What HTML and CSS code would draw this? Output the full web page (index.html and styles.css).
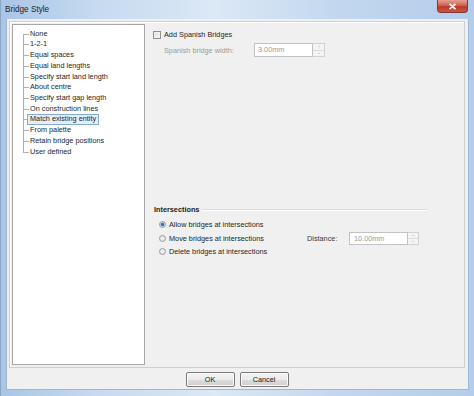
FILE: index.html
```html
<!DOCTYPE html>
<html>
<head>
<meta charset="utf-8">
<link rel="stylesheet" href="styles.css">
</head>
<body>
<div class="window">
  <div class="titlebar">
    <span class="title">Bridge Style</span>
    <div class="close">
      <svg width="9" height="7" viewBox="0 0 9 7"><path d="M1.5 0.8 L7.5 6.2 M7.5 0.8 L1.5 6.2" stroke="#fff" stroke-width="1.8" fill="none"/></svg>
    </div>
  </div>
  <div class="client">
    <div class="panel">
      <div class="tree">
        <ul class="tree-list">
          <li><span>None</span></li>
          <li><span>1-2-1</span></li>
          <li><span>Equal spaces</span></li>
          <li><span>Equal land lengths</span></li>
          <li><span>Specify start land length</span></li>
          <li><span>About centre</span></li>
          <li><span>Specify start gap length</span></li>
          <li><span>On construction lines</span></li>
          <li><span class="selected">Match existing entity</span></li>
          <li><span>From palette</span></li>
          <li><span>Retain bridge positions</span></li>
          <li><span>User defined</span></li>
        </ul>
      </div>
      <div class="options">
        <div class="check-row"><span class="checkbox"></span><span>Add Spanish Bridges</span></div>
        <div class="field-row">
          <span class="field-label disabled">Spanish bridge width:</span>
          <div class="spin">
            <div class="spin-input disabled">3.00mm</div>
            <div class="spin-btns"><span class="spin-up"></span><span class="spin-down"></span></div>
          </div>
        </div>
        <div class="group">
          <div class="group-title"><span class="group-name">Intersections</span><span class="rule"></span></div>
          <div class="radios">
            <div class="radio-row"><span class="radio checked"></span><span class="radio-label">Allow bridges at intersections</span></div>
            <div class="radio-row"><span class="radio"></span><span class="radio-label">Move bridges at intersections</span>
              <span class="dist-label">Distance:</span>
              <div class="spin small">
                <div class="spin-input disabled">10.00mm</div>
                <div class="spin-btns"><span class="spin-up"></span><span class="spin-down"></span></div>
              </div>
            </div>
            <div class="radio-row"><span class="radio"></span><span class="radio-label">Delete bridges at intersections</span></div>
          </div>
        </div>
      </div>
    </div>
    <div class="buttons">
      <button class="btn">OK</button>
      <button class="btn">Cancel</button>
    </div>
  </div>
</div>
</body>
</html>
```

FILE: styles.css
```css
* { box-sizing: border-box; }
html, body { margin: 0; padding: 0; }
body {
  width: 474px;
  height: 396px;
  font-family: "Liberation Sans", Arial, sans-serif;
  font-size: 7.3px;
  color: #262626;
  overflow: hidden;
}
.window {
  width: 474px;
  height: 396px;
  display: flex;
  flex-direction: column;
  background: linear-gradient(to right, #a9c5e6 0%, #c6daf0 20%, #dbe8f6 45%, #c3d8ef 70%, #b4cdea 100%);
  border-left: 1px solid #8aa6c8;
}
.titlebar {
  height: 19px;
  display: flex;
  align-items: flex-start;
  justify-content: space-between;
  flex: none;
}
.title {
  font-size: 8.2px;
  line-height: 20px;
  padding-left: 4px;
  color: #1e1e1e;
}
.close {
  width: 31px;
  height: 13px;
  margin-right: 6px;
  border: 1px solid #7d3a3a;
  border-top: none;
  border-radius: 0 0 4px 4px;
  background: linear-gradient(to bottom, #e6a090 0%, #d2624e 45%, #bd3a2a 55%, #c9563e 100%);
  display: flex;
  align-items: center;
  justify-content: center;
}
.client {
  flex: 1;
  margin: 0 5px 6px 5px;
  background: #f0f0f0;
  padding: 2px 3px 0 2px;
  display: flex;
  flex-direction: column;
  border: 1px solid #9fb6d2;
  border-top: none;
}
.panel {
  height: 347px;
  border: 1px solid #cfcfcf;
  box-shadow: inset 1px 1px 0 #fff;
  padding: 2px;
  display: flex;
}
.tree {
  width: 133px;
  background: #fff;
  border: 1px solid #a7a7a7;
}
.tree-list {
  list-style: none;
  margin: 0;
  padding: 3.7px 0 0 16px;
}
.tree-list li {
  position: relative;
  height: 10.72px;
  line-height: 10.72px;
  white-space: nowrap;
}
.tree-list li::before {
  content: "";
  position: absolute;
  left: -6px;
  top: 5px;
  width: 6px;
  border-top: 1px solid #b0b0b0;
}
.tree-list li::after {
  content: "";
  position: absolute;
  left: -6px;
  top: 0;
  height: 100%;
  border-left: 1px solid #b0b0b0;
}
.tree-list li:first-child::after { top: 5px; height: 6px; }
.tree-list li:last-child::after { height: 6px; }
.tree-list li span {
  display: inline-block;
  margin-left: -2px;
  padding: 0 2px;
  line-height: 8.7px;
  border: 1px solid transparent;
  position: relative;
  z-index: 1;
}
.tree-list li span.selected {
  border-color: #86abd8;
  background: #e4eefb;
}
.options {
  flex: 1;
  padding-left: 8px;
  display: flex;
  flex-direction: column;
}
.check-row {
  margin-top: 6px;
  height: 9px;
  display: flex;
  align-items: center;
  gap: 3px;
}
.checkbox {
  width: 8px;
  height: 8px;
  border: 1px solid #8e8f8f;
  background: linear-gradient(135deg, #dcdcdc, #f8f8f8);
  box-shadow: inset 0 0 0 1px #f2f2f2;
}
.field-row {
  margin-top: 4px;
  padding-left: 11px;
  display: flex;
  align-items: center;
  height: 14px;
}
.field-label { width: 90px; }
.disabled { color: #9b9b9b; }
.spin { display: flex; height: 14px; }
.spin-input {
  width: 59px;
  border: 1px solid #c2c2c2;
  background: #fff;
  padding-left: 3px;
  line-height: 12px;
}
.spin-btns {
  width: 12px;
  display: flex;
  flex-direction: column;
  border: 1px solid #d2d2d2;
  border-left: none;
  background: #f4f4f4;
}
.spin-btns span {
  flex: 1;
  display: flex;
  align-items: center;
  justify-content: center;
}
.spin-up { border-bottom: 1px solid #dcdcdc; }
.spin-up::after {
  content: "";
  border-left: 1.5px solid transparent;
  border-right: 1.5px solid transparent;
  border-bottom: 1.5px solid #a8a8a8;
}
.spin-down::after {
  content: "";
  border-left: 1.5px solid transparent;
  border-right: 1.5px solid transparent;
  border-top: 1.5px solid #a8a8a8;
}
.spin.small { height: 13px; }
.spin.small .spin-btns { width: 11px; }
.spin.small .spin-input { line-height: 11px; padding-left: 4px; }
.group { margin-top: 147.5px; }
.group-title {
  display: flex;
  align-items: center;
  height: 9px;
  padding-left: 1px;
}
.group-name { font-weight: bold; color: #222; }
.rule {
  flex: 1;
  margin: 1px 34px 0 3px;
  border-top: 1px solid #dadada;
  border-bottom: 1px solid #fff;
}
.radios { margin-top: 4.5px; }
.radio-row {
  height: 13.6px;
  display: flex;
  align-items: center;
  padding-left: 6px;
}
.radio {
  width: 7px;
  height: 7px;
  border-radius: 50%;
  border: 1px solid #9a9a9a;
  background: radial-gradient(circle, #f6f6f6, #dcdcdc);
  margin-right: 3px;
  flex: none;
}
.radio.checked {
  background: radial-gradient(circle, #2f5e9c 0, #4a7fc0 1.5px, #dfe8f2 2.3px, #e6e6e6 100%);
}
.radio-label { width: 138px; }
.dist-label { width: 42px; color: #3a3a3a; }
.buttons {
  padding-top: 4px;
  display: flex;
  justify-content: center;
  gap: 5px;
}
.btn {
  width: 49px;
  height: 15px;
  padding: 0;
  font-family: "Liberation Sans", Arial, sans-serif;
  font-size: 7.3px;
  color: #1a1a1a;
  border: 1px solid #7a7a7a;
  border-radius: 2px;
  background: linear-gradient(to bottom, #f3f3f3 0%, #ebebeb 50%, #dddddd 51%, #cfcfcf 100%);
  box-shadow: inset 0 0 0 1px #fbfbfb;
}
```
